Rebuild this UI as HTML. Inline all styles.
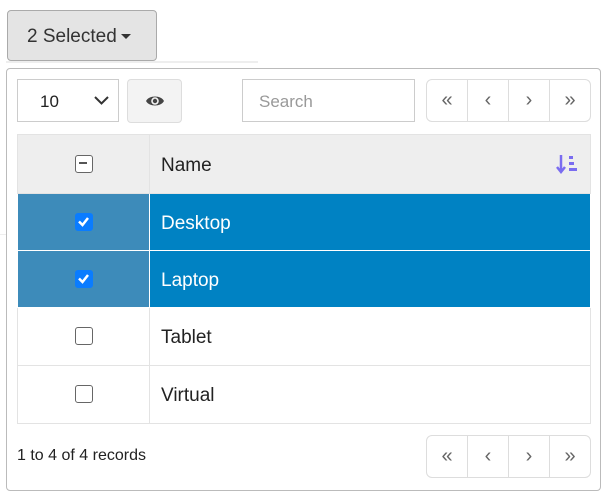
<!DOCTYPE html>
<html><head><style>
*{box-sizing:border-box}
body{margin:0;width:607px;height:497px;background:#fff;font-family:"Liberation Sans",sans-serif;color:#222;position:relative;overflow:hidden}
.a{position:absolute}
.btn{left:7px;top:10px;width:150px;height:51px;background:#e4e4e4;border:1px solid #aaa;border-radius:4px;font-size:19px;padding:15px 0 0 19px;color:#333}
.car{display:inline-block;border-left:5px solid transparent;border-right:5px solid transparent;border-top:5px solid #333;vertical-align:middle;margin-left:4px}
.panel{left:6px;top:68px;width:595px;height:423px;border:1px solid #bbb;border-radius:4px}
.box{border:1px solid #ccc;background:#fff}
.pg{display:flex;border:1px solid #ddd;border-radius:6px;background:#fff}
.pg div{flex:1;border-left:1px solid #ddd;text-align:center;line-height:40px;color:#666;font-size:20px}
.pg div:first-child{border-left:none}
table{border-collapse:collapse;left:17px;top:134px;width:574px}
td{border:1px solid #e3e3e3;font-size:19px;padding:3px 0 0 11px}
td.c{width:132px;text-align:center;padding:0}
.cb{display:inline-block;width:18px;height:18px;border:1.5px solid #666;border-radius:3px;vertical-align:middle;position:relative;background:#fff}
.ck{background:#0a7cff;border-color:#0a7cff}
.sel td{background:#0082c3;color:#fff;border-color:#fff}
.sel td.c{background:#3d8bba}
</style></head><body>
<div class="a btn">2 Selected<span class="car"></span></div>
<div class="a" style="left:6px;top:61px;width:252px;height:2px;background:#eee"></div>
<div class="a" style="left:0;top:75px;width:6px;height:160px;border-bottom:1px solid #eee"></div>
<div class="a panel"></div>
<div class="a box" style="left:17px;top:79px;width:102px;height:43px;font-size:17px;padding:12px 0 0 22px">10
<svg class="a" style="left:76px;top:16px" width="15" height="10"><path d="M1 1l6.5 6.5L14 1" stroke="#333" stroke-width="2" fill="none"/></svg></div>
<div class="a" style="left:127px;top:79px;width:55px;height:44px;background:#f3f3f3;border:1px solid #ddd;border-radius:4px">
<svg class="a" style="left:17px;top:14px" width="20" height="14"><path d="M1 7C4 1 16 1 19 7C16 13 4 13 1 7Z" fill="#444"/><circle cx="10" cy="7" r="3.8" fill="#f3f3f3"/><circle cx="10" cy="7" r="2.2" fill="#444"/></svg></div>
<div class="a box" style="left:242px;top:79px;width:173px;height:43px;font-size:17px;color:#999;padding:12px 0 0 16px">Search</div>
<div class="a pg" style="left:426px;top:79px;width:165px;height:43px"><div>«</div><div>‹</div><div>›</div><div>»</div></div>
<table class="a">
<tr style="height:59px;background:#eee"><td class="c"><span class="cb" style="background:#fff"><span class="a" style="left:3.5px;top:6.5px;width:8px;height:2px;background:#555"></span></span></td><td style="position:relative">Name
<svg class="a" style="right:12px;top:19px" width="22" height="21"><path d="M5 1v16M1 13l4 5 4-5" stroke="#7a6cf0" stroke-width="2.5" fill="none"/><rect x="13" y="2" width="4" height="3" fill="#7a6cf0"/><rect x="13" y="8" width="5" height="3" fill="#7a6cf0"/><rect x="13" y="14" width="8" height="3" fill="#7a6cf0"/></svg></td></tr>
<tr class="sel" style="height:57px"><td class="c"><span class="cb ck"><svg class="a" style="left:1px;top:2px" width="13" height="11"><path d="M2 5.5l3.5 3.5L11 2" stroke="#fff" stroke-width="2.5" fill="none"/></svg></span></td><td>Desktop</td></tr>
<tr class="sel" style="height:57px"><td class="c"><span class="cb ck"><svg class="a" style="left:1px;top:2px" width="13" height="11"><path d="M2 5.5l3.5 3.5L11 2" stroke="#fff" stroke-width="2.5" fill="none"/></svg></span></td><td>Laptop</td></tr>
<tr style="height:58px"><td class="c"><span class="cb"></span></td><td>Tablet</td></tr>
<tr style="height:58px"><td class="c"><span class="cb"></span></td><td>Virtual</td></tr>
</table>
<div class="a" style="left:17px;top:447px;font-size:16px">1 to 4 of 4 records</div>
<div class="a pg" style="left:426px;top:435px;width:165px;height:43px"><div>«</div><div>‹</div><div>›</div><div>»</div></div>
</body></html>
